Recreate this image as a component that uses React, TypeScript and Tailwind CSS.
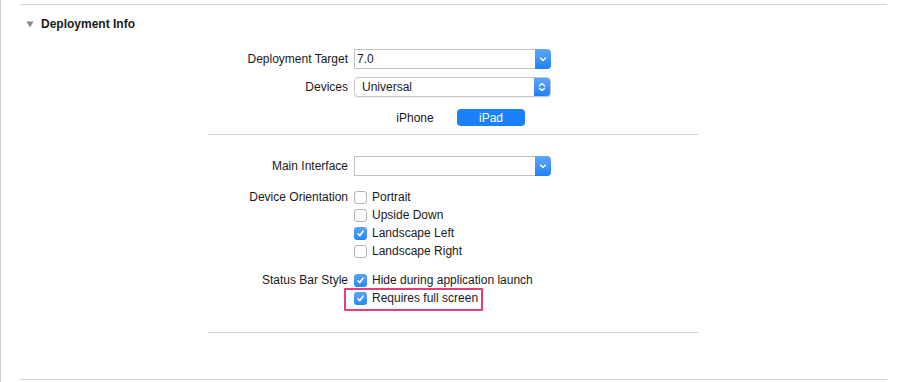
import React from 'react';

const font = { fontFamily: '"Helvetica Neue", "Liberation Sans", Arial, sans-serif' };

function Chevron({ double }: { double?: boolean }) {
  return (
    <svg width="8" height="10" viewBox="0 0 8 10" fill="none" stroke="white" strokeWidth="1.4" strokeLinecap="round" strokeLinejoin="round">
      {double ? (
        <>
          <path d="M1.5 3.8 L4 1.5 L6.5 3.8" />
          <path d="M1.5 6.2 L4 8.5 L6.5 6.2" />
        </>
      ) : (
        <path d="M1.5 4 L4 6.5 L6.5 4" />
      )}
    </svg>
  );
}

function Combo({ value }: { value: string }) {
  return (
    <div className="flex h-[20px] w-[197px]">
      <div className="flex-1 h-full border border-[#c2c2c2] border-r-0 bg-white flex items-center pl-[2px] text-[12px] text-[#1a1a1a]">
        {value}
      </div>
      <div className="w-[16px] h-full rounded-r-[4px] bg-gradient-to-b from-[#5ea6fb] to-[#1f7ff5] flex items-center justify-center">
        <Chevron />
      </div>
    </div>
  );
}

function Popup({ value }: { value: string }) {
  return (
    <div className="flex h-[20px] w-[197px] rounded-[4px] border border-[#c6c6c6] bg-white shadow-[0_1px_0_rgba(0,0,0,0.06)] overflow-hidden">
      <div className="flex-1 flex items-center pl-[7px] text-[12px] text-[#1a1a1a]">{value}</div>
      <div className="w-[16px] h-full bg-gradient-to-b from-[#5ea6fb] to-[#1f7ff5] flex items-center justify-center">
        <Chevron double />
      </div>
    </div>
  );
}

function Check({ label, checked }: { label: string; checked?: boolean }) {
  return (
    <div className="flex items-center h-[18px] text-[12px] text-[#1a1a1a]">
      {checked ? (
        <div className="w-[13px] h-[13px] rounded-[3px] bg-gradient-to-b from-[#5aa3fa] to-[#2a86f6] flex items-center justify-center">
          <svg width="9" height="9" viewBox="0 0 9 9" fill="none" stroke="white" strokeWidth="1.6" strokeLinecap="round" strokeLinejoin="round">
            <path d="M2 4.8 L3.8 6.6 L7 2.2" />
          </svg>
        </div>
      ) : (
        <div className="w-[13px] h-[13px] rounded-[3px] border border-[#b4b4b4] bg-white" />
      )}
      <span className="ml-[5px]">{label}</span>
    </div>
  );
}

function Row({ label, children, className = '' }: { label: string; children: React.ReactNode; className?: string }) {
  return (
    <div className={`grid grid-cols-[140px_1fr] gap-x-[6px] ${className}`}>
      <div className="text-right text-[12px] text-[#1a1a1a] h-[18px] flex items-center justify-end">{label}</div>
      <div>{children}</div>
    </div>
  );
}

export default function App() {
  return (
    <div className="w-[900px] h-[382px] bg-white border-l border-[#cfcfcf] overflow-hidden" style={font}>
      <div className="ml-[19px] mt-[4px] w-[867px] border-t border-[#d6d6d6]" />

      <div className="ml-[25px] mt-[12px] h-[14px] flex items-center">
        <svg width="8" height="7" viewBox="0 0 8 7">
          <path d="M0.5 0.5 H7.5 L4 6.5 Z" fill="#8a8a8a" />
        </svg>
        <span className="ml-[7px] text-[12px] font-bold text-[#1a1a1a]">Deployment Info</span>
      </div>

      <div className="ml-[207px] w-[490px]">
        <div className="mt-[18px] grid grid-cols-[140px_1fr] gap-x-[6px] items-center">
          <div className="text-right text-[12px] text-[#1a1a1a]">Deployment Target</div>
          <Combo value="7.0" />
        </div>
        <div className="mt-[8px] grid grid-cols-[140px_1fr] gap-x-[6px] items-center">
          <div className="text-right text-[12px] text-[#1a1a1a]">Devices</div>
          <Popup value="Universal" />
        </div>

        <div className="mt-[12px] flex items-center h-[17px] ml-[173px]">
          <div className="w-[68px] text-center text-[12px] text-[#1a1a1a]">iPhone</div>
          <div className="ml-[8px] w-[68px] h-[17px] rounded-[4px] bg-[#1b81fa] text-white text-[12px] flex items-center justify-center">
            iPad
          </div>
        </div>

        <div className="mt-[8px] border-t border-[#d0d0d0]" />

        <div className="mt-[21px] grid grid-cols-[140px_1fr] gap-x-[6px] items-center">
          <div className="text-right text-[12px] text-[#1a1a1a]">Main Interface</div>
          <Combo value="" />
        </div>

        <Row label="Device Orientation" className="mt-[12px]">
          <Check label="Portrait" />
          <Check label="Upside Down" />
          <Check label="Landscape Left" checked />
          <Check label="Landscape Right" />
        </Row>

        <Row label="Status Bar Style" className="mt-[11px]">
          <Check label="Hide during application launch" checked />
          <div className="relative">
            <Check label="Requires full screen" checked />
            <div className="absolute left-[-10px] top-[-1px] w-[139px] h-[23px] border-2 border-[#e63d76] rounded-[1px] pointer-events-none" />
          </div>
        </Row>

        <div className="mt-[25px] border-t border-[#d0d0d0]" />
      </div>

      <div className="ml-[19px] mt-[46px] w-[867px] border-t border-[#d6d6d6]" />
    </div>
  );
}
